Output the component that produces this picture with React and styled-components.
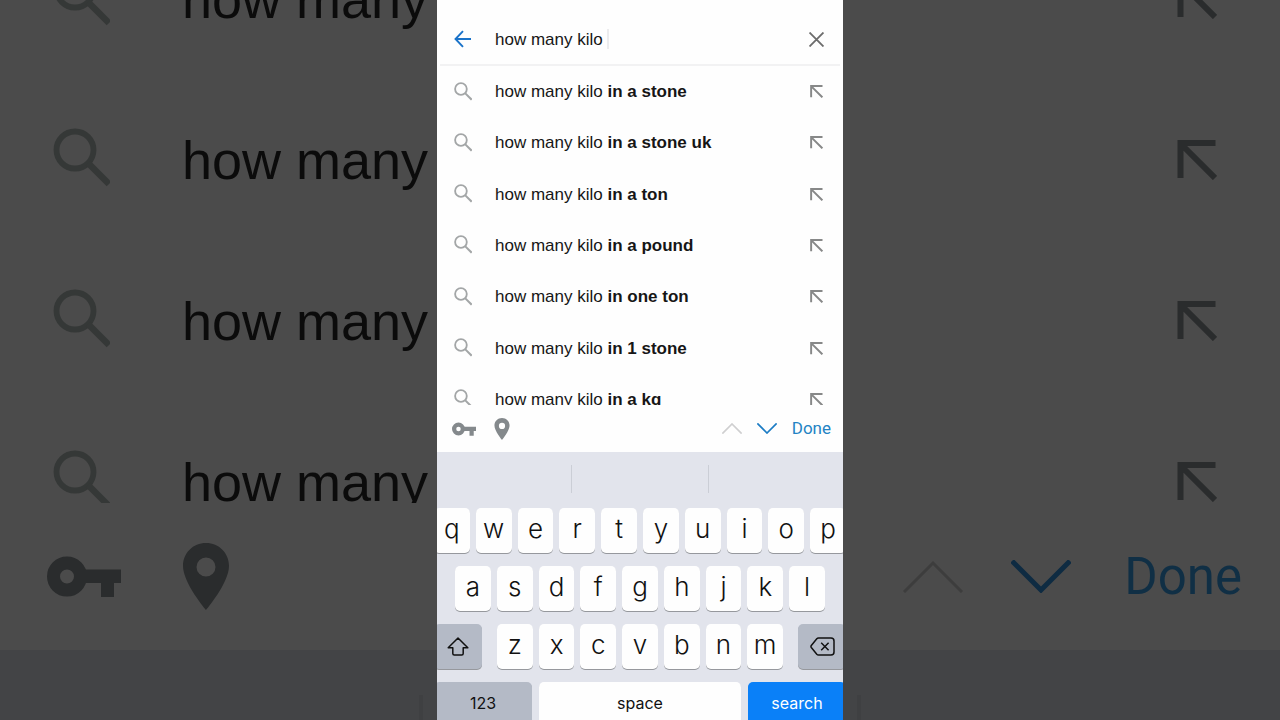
import React, { useState } from 'react';
import styled, { createGlobalStyle } from 'styled-components';

const suggestions = [
  'in a stone',
  'in a stone uk',
  'in a ton',
  'in a pound',
  'in one ton',
  'in 1 stone',
  'in a kg',
]

const keyRows = ['qwertyuiop', 'asdfghjkl', 'zxcvbnm']

const GlobalStyle = createGlobalStyle`
* {
  box-sizing: border-box;
}
body {
  margin: 0;
  background: #4b4b4b;
  font-family: "Liberation Sans", Arial, sans-serif;
}
button, input {
  font: inherit;
  color: inherit;
  border: none;
  padding: 0;
  background: none;
}
button {
  cursor: pointer;
}
svg {
  display: block;
  flex: none;
}
`

const Page = styled.div`
display: grid;
grid-template-columns: minmax(0, 1fr) minmax(320px, 406px) minmax(0, 1fr);
height: 100vh;
overflow: hidden;
`

/* dimmed, enlarged copy of the screen on both sides */

const Backdrop = styled.div`
display: flex;
flex-direction: column;
overflow: hidden;
background: #4b4b4b;
color: #2a2c2d;
`

const BackdropList = styled.div`
height: 503px;
overflow: hidden;
flex: none;
`

const BackdropRows = styled.div`
margin-top: -82px;
`

const BackdropRow = styled.div`
display: flex;
align-items: center;
justify-content: ${p => p.$end ? 'flex-end' : 'flex-start'};
gap: 72px;
height: 161px;
padding: ${p => p.$end ? '0 63px 0 0' : '0 0 0 53px'};
color: ${p => p.$end ? '#2a2c2d' : '#353837'};
`

const BackdropText = styled.span`
font-size: 54px;
line-height: 64px;
white-space: nowrap;
color: #0b0b0b;
`

const BackdropTools = styled.div`
display: flex;
align-items: center;
justify-content: ${p => p.$end ? 'flex-end' : 'flex-start'};
gap: ${p => p.$end ? '53px' : '62px'};
height: 147px;
flex: none;
padding: 0 38px 0 47px;
`

const BackdropArrows = styled.div`
display: flex;
gap: 48px;
`

const BackdropDone = styled.span`
font-family: Roboto, sans-serif;
font-size: 51px;
line-height: 60px;
color: #102f45;
`

const BackdropKeyboard = styled.div`
display: flex;
justify-content: ${p => p.$end ? 'flex-start' : 'flex-end'};
flex: 1;
padding: 45px 14px 0;
background: #434446;
`

const BackdropDivider = styled.span`
width: 4px;
background: #3f4042;
`

/* phone */

const Phone = styled.main`
display: flex;
flex-direction: column;
overflow: hidden;
background: #fefefe;
color: #161616;
font-size: 17px;
line-height: 20px;
`

const SearchBar = styled.form`
display: flex;
align-items: center;
flex: none;
height: 66px;
margin: 0 3px;
padding: 14px 16px 0 14px;
border-bottom: 2px solid #f2f2f3;
`

const BackButton = styled.button`
color: #1a73c9;
margin-right: 23px;
`

const Field = styled.label`
display: flex;
align-items: center;
flex: 1;
`

const Input = styled.input`
field-sizing: content;
padding-top: 2px;
outline: none;
white-space: pre;
`

const Caret = styled.span`
width: 2px;
height: 20px;
background: #ececee;
`

const ClearButton = styled.button`
color: #6c6c6c;
`

const ListView = styled.div`
height: 339px;
flex: none;
overflow: hidden;
`

const List = styled.ul`
display: grid;
grid-auto-rows: 1fr;
min-height: 359px;
margin: 0;
padding: 0;
list-style: none;
`

const Row = styled.li`
display: flex;
align-items: center;
padding: 0 20px 0 17px;
`

const RowLink = styled.a`
display: flex;
align-items: center;
gap: 23px;
flex: 1;
color: #a3a6a7;
text-decoration: none;
`

const RowText = styled.span`
padding-top: 1px;
color: #161616;
`

const FillButton = styled.button`
color: #878888;
`

const Tools = styled.div`
display: flex;
align-items: center;
flex: none;
height: 47px;
padding: 0 12px 0 15px;
`

const ToolButton = styled.button`
color: ${p => p.$color || '#84898c'};
margin-right: ${p => p.$gap || 0}px;
`

const Spacer = styled.div`
flex: 1;
`

const DoneButton = styled.button`
font-family: Roboto, sans-serif;
font-size: 17px;
line-height: 18px;
padding-bottom: 2px;
color: #2383c4;
`

const Keyboard = styled.div`
flex: 1 0 auto;
background: #e2e4ec;
font-family: Inter, sans-serif;
`

const KeyboardInner = styled.div`
display: flex;
flex-direction: column;
gap: 13px;
margin: 0 -3px;
`

const Predictions = styled.div`
display: flex;
height: 43px;
padding: 13px 0 2px;
`

const Prediction = styled.div`
flex: 1;
& + & {
  border-left: 1px solid #cbced6;
}
`

const KeyRow = styled.div`
display: flex;
gap: ${p => p.$gap || 6}px;
height: 45px;
padding: 0 ${p => p.$inset || 0}px;
`

const KeyGroup = styled.div`
display: flex;
gap: 6px;
flex: 1;
`

const Key = styled.button`
flex: 1 1 0;
min-width: 0;
padding-bottom: 4px;
border-radius: 5px;
background: #fefefe;
box-shadow: 0 1px 0 #96989d;
color: #111;
font-size: 26px;
font-weight: 300;
line-height: 32px;
`

const FunctionKey = styled.button`
display: flex;
align-items: center;
justify-content: center;
flex: ${p => p.$width ? `0 0 ${p.$width}px` : '1'};
padding-bottom: ${p => p.$label ? '4px' : '0'};
border-radius: 5px;
background: ${p => p.$tone || '#b4bac6'};
box-shadow: 0 1px 0 #96989d;
color: ${p => p.$color || '#111'};
font-size: 16px;
`

const SearchIcon = ({ size }) => (
  <svg width={size} height={Math.round(size * 63 / 57)} viewBox="0 0 57 63" fill="none" stroke="currentColor" strokeWidth="5.8">
    <circle cx="22" cy="22" r="18.5" />
    <path d="M35 35L56 56" strokeWidth="6.5" />
  </svg>
)

const FillIcon = ({ size }) => (
  <svg width={size} height={size} viewBox="0 0 40 40" fill="none" stroke="currentColor" strokeWidth="6">
    <path d="M3.5 38V3H38.500M5 5L38 38" />
  </svg>
)

const KeyIcon = ({ width, height }) => (
  <svg width={width} height={height} viewBox="0 0 74 41">
    <circle cx="20" cy="20.500" r="13.5" fill="none" stroke="currentColor" strokeWidth="13" />
    <path d="M36 13.500H74V27H67V41H54V27H36Z" fill="currentColor" />
  </svg>
)

const PinIcon = ({ width, height }) => (
  <svg width={width} height={height} viewBox="0 0 46 67">
    <path fill="currentColor" fillRule="evenodd" d="M23 0C10 0 0 10 0 23C0 40 23 67 23 67S46 40 46 23C46 10 36 0 23 0ZM23 14.500A9.500 9.500 0 1 1 23 33.500A9.500 9.500 0 1 1 23 14.500Z" />
  </svg>
)

const ChevronIcon = ({ width, height, up, color = 'currentColor', stroke = 5 }) => (
  <svg width={width} height={height} viewBox="0 0 60 33" fill="none" stroke={color} strokeWidth={stroke}>
    <path d={up ? 'M1 32L30 3L59 32' : 'M1 1L30 30L59 1'} />
  </svg>
)

const BackdropLeft = () => (
  <Backdrop aria-hidden="true">
    <BackdropList>
      <BackdropRows>
        {[0, 1, 2, 3].map(i => (
          <BackdropRow key={i}>
            <SearchIcon size={57} />
            <BackdropText>how many</BackdropText>
          </BackdropRow>
        ))}
      </BackdropRows>
    </BackdropList>
    <BackdropTools>
      <KeyIcon width={74} height={41} />
      <PinIcon width={46} height={67} />
    </BackdropTools>
    <BackdropKeyboard>
      <BackdropDivider />
    </BackdropKeyboard>
  </Backdrop>
)

const BackdropRight = () => (
  <Backdrop aria-hidden="true">
    <BackdropList>
      <BackdropRows>
        {[0, 1, 2, 3].map(i => (
          <BackdropRow key={i} $end>
            <FillIcon size={40} />
          </BackdropRow>
        ))}
      </BackdropRows>
    </BackdropList>
    <BackdropTools $end>
      <BackdropArrows>
        <ChevronIcon width={60} height={33} color="#3d3d3d" stroke={3} up />
        <ChevronIcon width={60} height={33} color="#0e2b42" />
      </BackdropArrows>
      <BackdropDone>Done</BackdropDone>
    </BackdropTools>
    <BackdropKeyboard $end>
      <BackdropDivider />
    </BackdropKeyboard>
  </Backdrop>
)

const Letters = ({ letters, onPress }) => letters.split('').map(letter => (
  <Key key={letter} type="button" onClick={() => onPress(letter)}>{letter}</Key>
))

function App() {

  const [query, setQuery] = useState('how many kilo ')

  const add = (text) => setQuery(query + text)

  return (
    <>
      <GlobalStyle />
      <Page>
        <BackdropLeft />
        <Phone>
          <SearchBar onSubmit={e => e.preventDefault()}>
            <BackButton type="button" aria-label="Back">
              <svg width="18" height="18" viewBox="0 0 18 18" fill="none" stroke="currentColor" strokeWidth="1.9">
                <path d="M17 9H1.500M9 1.200L1.500 9L9 16.800" />
              </svg>
            </BackButton>
            <Field>
              <Input aria-label="Search" value={query} onChange={e => setQuery(e.target.value)} />
              <Caret />
            </Field>
            <ClearButton type="button" aria-label="Clear" onClick={() => setQuery('')}>
              <svg width="15" height="15" viewBox="0 0 14 14" fill="none" stroke="currentColor" strokeWidth="1.7">
                <path d="M0.500 0.500L13.500 13.500M13.500 0.500L0.500 13.500" />
              </svg>
            </ClearButton>
          </SearchBar>

          <ListView>
            <List>
              {suggestions.map(s => (
                <Row key={s}>
                  <RowLink href="#">
                    <SearchIcon size={18} />
                    <RowText>how many kilo <b>{s}</b></RowText>
                  </RowLink>
                  <FillButton type="button" aria-label={`Use how many kilo ${s}`} onClick={() => setQuery(`how many kilo ${s}`)}>
                    <FillIcon size={13} />
                  </FillButton>
                </Row>
              ))}
            </List>
          </ListView>

          <Tools>
            <ToolButton type="button" aria-label="Passwords" $gap={18}>
              <KeyIcon width={24} height={14} />
            </ToolButton>
            <ToolButton type="button" aria-label="Addresses">
              <PinIcon width={16} height={22} />
            </ToolButton>
            <Spacer />
            <ToolButton type="button" aria-label="Previous field" $gap={15} $color="#cfcfd0">
              <ChevronIcon width={20} height={11} up />
            </ToolButton>
            <ToolButton type="button" aria-label="Next field" $gap={15} $color="#1c7cc4">
              <ChevronIcon width={20} height={11} />
            </ToolButton>
            <DoneButton type="button">Done</DoneButton>
          </Tools>

          <Keyboard>
            <KeyboardInner>
              <Predictions>
                <Prediction />
                <Prediction />
                <Prediction />
              </Predictions>
              <KeyRow>
                <Letters letters={keyRows[0]} onPress={add} />
              </KeyRow>
              <KeyRow $inset={21}>
                <Letters letters={keyRows[1]} onPress={add} />
              </KeyRow>
              <KeyRow $gap={15}>
                <FunctionKey type="button" aria-label="Shift" $width={48}>
                  <svg width="22" height="19" viewBox="0 0 22 19" fill="none" stroke="currentColor" strokeWidth="1.5" strokeLinejoin="round">
                    <path d="M11 1L20.800 10.800H16.200V16.500Q16.200 18 14.700 18H7.300Q5.800 18 5.800 16.500V10.800H1.200Z" />
                  </svg>
                </FunctionKey>
                <KeyGroup>
                  <Letters letters={keyRows[2]} onPress={add} />
                </KeyGroup>
                <FunctionKey type="button" aria-label="Delete" $width={48} onClick={() => setQuery(query.slice(0, -1))}>
                  <svg width="25" height="19" viewBox="0 0 25 19" fill="none" stroke="currentColor" strokeWidth="1.5" strokeLinejoin="round">
                    <path d="M8.500 1H21Q24 1 24 4V15Q24 18 21 18H8.500Q7.500 18 6.800 17.200L1.300 10.500Q0.600 9.500 1.300 8.500L6.800 1.800Q7.500 1 8.500 1Z" />
                    <path d="M11.200 5.800L18.600 13.200M18.600 5.800L11.200 13.200" />
                  </svg>
                </FunctionKey>
              </KeyRow>
              <KeyRow $gap={7}>
                <FunctionKey type="button" $label $width={98}>123</FunctionKey>
                <FunctionKey type="button" $label $tone="#fefefe" onClick={() => add(' ')}>space</FunctionKey>
                <FunctionKey type="button" $label $width={98} $tone="#0a80f8" $color="#fff">search</FunctionKey>
              </KeyRow>
            </KeyboardInner>
          </Keyboard>
        </Phone>
        <BackdropRight />
      </Page>
    </>
  );
}

export default App;
